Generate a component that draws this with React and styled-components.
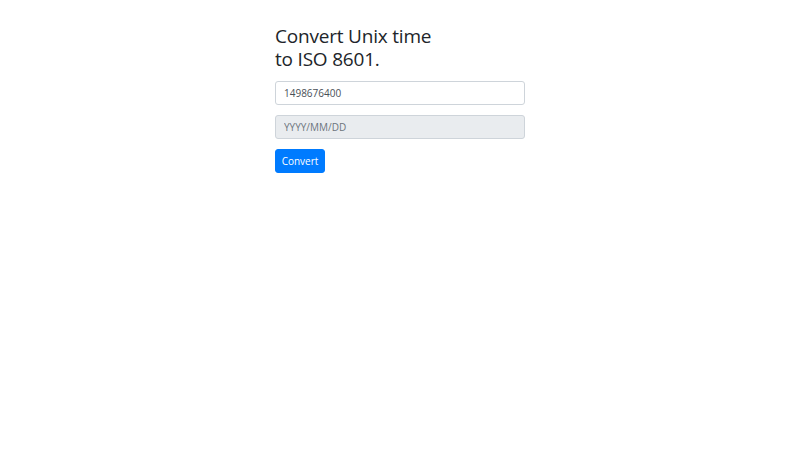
import React, { useState } from 'react';
import styled, { createGlobalStyle } from 'styled-components';

const GlobalStyle = createGlobalStyle`
  html, body {
    margin: 0;
    padding: 0;
    background: #fff;
    font-family: "Open Sans", "Noto Sans", sans-serif;
    color: #212529;
  }
`

const Page = styled.div`
  display: flex;
  justify-content: center;
  padding-top: 25px;
`

const Form = styled.div`
  width: 250px;
  display: flex;
  flex-direction: column;
`

const Title = styled.h1`
  margin: 0 0 10px 0;
  font-size: 19px;
  font-weight: 400;
  line-height: 23px;
  letter-spacing: -0.2px;
`

const Input = styled.input`
  box-sizing: border-box;
  width: 100%;
  height: 24px;
  margin-bottom: 10px;
  padding: 0 8px;
  border: 1px solid #ced4da;
  border-radius: 3px;
  font-family: inherit;
  font-size: 10px;
  color: #495057;
  background: ${p => (p.disabled ? '#e9ecef' : '#fff')};
  &::placeholder {
    color: #6c757d;
  }
`

const Button = styled.button`
  align-self: flex-start;
  width: 50px;
  height: 24px;
  padding: 0;
  border: 1px solid #007bff;
  border-radius: 3px;
  background: #007bff;
  color: #fff;
  font-family: inherit;
  font-size: 10px;
  cursor: pointer;
`

export default function App() {
  const [value, setValue] = useState('1498676400');

  return (
    <Page>
      <GlobalStyle />
      <Form>
        <Title>Convert Unix time<br />to ISO 8601.</Title>
        <Input value={value} onChange={e => setValue(e.target.value)} />
        <Input disabled placeholder="YYYY/MM/DD" />
        <Button>Convert</Button>
      </Form>
    </Page>
  );
}
